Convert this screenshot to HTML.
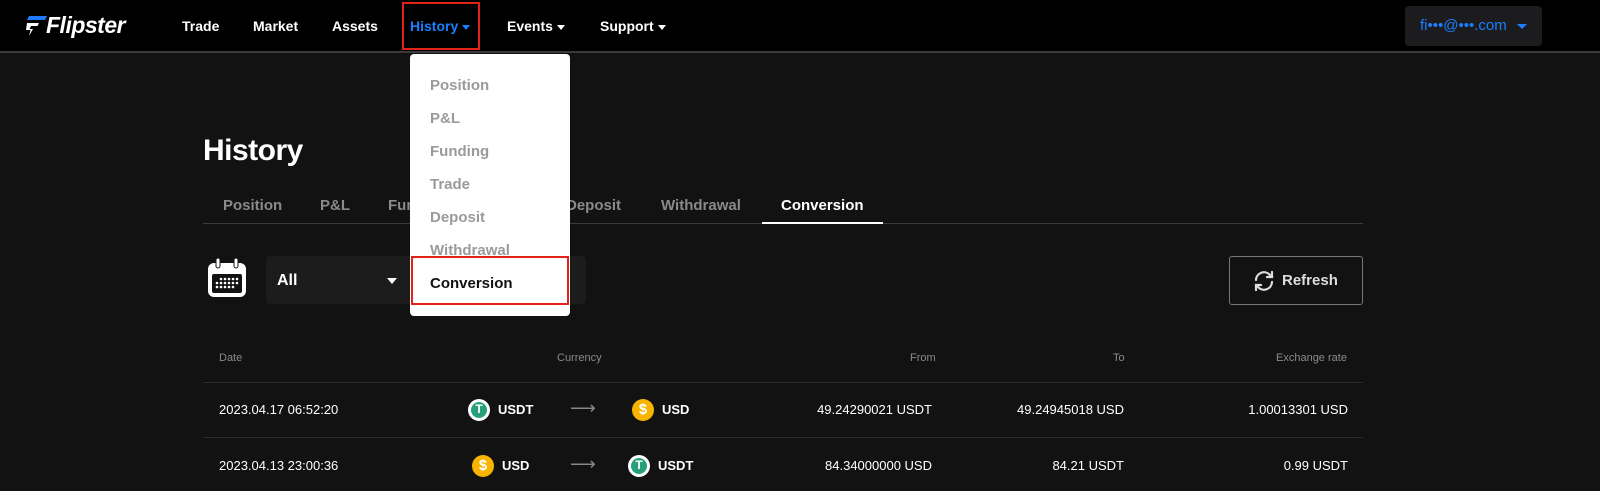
<!DOCTYPE html>
<html><head><style>
*{margin:0;padding:0;box-sizing:border-box}
body{width:1600px;height:491px;background:#121212;font-family:"Liberation Sans",sans-serif;color:#fff;position:relative;overflow:hidden}
.a{position:absolute;white-space:nowrap}
.nav{position:absolute;left:0;top:0;width:1600px;height:53px;background:#000;border-bottom:2px solid #3a3a3a}
.nl{font-size:14px;font-weight:bold;top:18px}
.car{display:inline-block;width:0;height:0;border-left:4px solid transparent;border-right:4px solid transparent;border-top:5px solid currentColor;vertical-align:middle;margin-left:4px}
.tab{font-size:15px;font-weight:bold;color:#8a8a8a;top:197px}
.dd{font-size:15px;font-weight:bold;color:#9a9a9a;left:430px}
.th{font-size:11px;color:#8a8a8a;top:352px}
.td{font-size:13px;top:402px}
.td2{top:458px}
.coin{position:absolute;width:22px;height:22px;border-radius:50%}
.t{background:#fff}.t::after{content:"";position:absolute;left:3px;top:3px;width:16px;height:16px;border-radius:50%;background:#26a17b}
.t span{position:absolute;left:0;top:3px;width:22px;text-align:center;font-size:12px;font-weight:bold;color:#fff;z-index:1}
.u{background:#f7b500;text-align:center;font-size:15px;font-weight:bold;line-height:22px;color:#fff}
</style></head><body>
<div class="nav"></div>
<svg class="a" style="left:24px;top:14px" width="24" height="24" viewBox="0 0 24 24"><path d="M5 2h18l-2 4H3z" fill="#1e7bff"/><path d="M3 9h12l-1.5 3H7l-1.5 3H9l-4 7 1.5-6H2z" fill="#fff"/></svg>
<div class="a" style="left:46px;top:12px;font-size:23px;font-weight:bold;font-style:italic;letter-spacing:-0.5px">Flipster</div>
<div class="a nl" style="left:182px">Trade</div>
<div class="a nl" style="left:253px">Market</div>
<div class="a nl" style="left:332px">Assets</div>
<div class="a nl" style="left:410px;color:#1a7fff">History<span class="car"></span></div>
<div class="a" style="left:402px;top:2px;width:78px;height:48px;border:2px solid #e2231a"></div>
<div class="a nl" style="left:507px">Events<span class="car"></span></div>
<div class="a nl" style="left:600px">Support<span class="car"></span></div>
<div class="a" style="left:1405px;top:6px;width:137px;height:40px;background:#1c1c1e;border-radius:4px"></div>
<div class="a" style="left:1420px;top:17px;font-size:15px;color:#1a7fff">fi•••@•••.com</div>
<div class="a" style="left:1517px;top:24px;width:0;height:0;border-left:5px solid transparent;border-right:5px solid transparent;border-top:5px solid #1a7fff"></div>

<div class="a" style="left:203px;top:134px;font-size:30px;font-weight:bold;letter-spacing:-0.5px">History</div>
<div class="a tab" style="left:223px">Position</div>
<div class="a tab" style="left:320px">P&amp;L</div>
<div class="a tab" style="left:388px">Funding</div>
<div class="a tab" style="left:566px">Deposit</div>
<div class="a tab" style="left:661px">Withdrawal</div>
<div class="a tab" style="left:781px;color:#fff">Conversion</div>
<div class="a" style="left:203px;top:223px;width:1160px;height:1px;background:#3a3a3a"></div>
<div class="a" style="left:762px;top:222px;width:121px;height:2px;background:#fff"></div>

<svg class="a" style="left:207px;top:258px" width="40" height="40" viewBox="0 0 40 40"><rect x="1" y="5" width="38" height="34" rx="6" fill="#fff"/><rect x="5" y="16" width="30" height="19" rx="2" fill="#121212"/><rect x="9" y="0" width="4" height="10" rx="2" fill="#fff" stroke="#121212"/><rect x="27" y="0" width="4" height="10" rx="2" fill="#fff" stroke="#121212"/><g fill="#fff"><circle cx="14" cy="21" r="1.3"/><circle cx="18" cy="21" r="1.3"/><circle cx="22" cy="21" r="1.3"/><circle cx="26" cy="21" r="1.3"/><circle cx="30" cy="21" r="1.3"/><circle cx="10" cy="25" r="1.3"/><circle cx="14" cy="25" r="1.3"/><circle cx="18" cy="25" r="1.3"/><circle cx="22" cy="25" r="1.3"/><circle cx="26" cy="25" r="1.3"/><circle cx="30" cy="25" r="1.3"/><circle cx="10" cy="29" r="1.3"/><circle cx="14" cy="29" r="1.3"/><circle cx="18" cy="29" r="1.3"/><circle cx="22" cy="29" r="1.3"/><circle cx="26" cy="29" r="1.3"/></g></svg>
<div class="a" style="left:266px;top:256px;width:320px;height:48px;background:#1c1c1c;border-radius:4px"></div>
<div class="a" style="left:277px;top:272px;font-size:16px;font-weight:bold">All</div>
<div class="a" style="left:387px;top:278px;width:0;height:0;border-left:5px solid transparent;border-right:5px solid transparent;border-top:6px solid #fff"></div>

<div class="a" style="left:1229px;top:256px;width:134px;height:49px;border:1px solid #777;border-radius:3px"></div>
<svg class="a" style="left:1253px;top:270px" width="22" height="22" viewBox="0 0 22 22" fill="none" stroke="#ddd" stroke-width="2.2" stroke-linecap="round"><path d="M3 10a8 8 0 0 1 14-5l2 2"/><path d="M19 2v5h-5"/><path d="M19 12a8 8 0 0 1-14 5l-2-2"/><path d="M3 20v-5h5"/></svg>
<div class="a" style="left:1282px;top:272px;font-size:15px;font-weight:bold;color:#ddd">Refresh</div>

<div class="a th" style="left:219px">Date</div>
<div class="a th" style="left:557px">Currency</div>
<div class="a th" style="left:910px">From</div>
<div class="a th" style="left:1113px">To</div>
<div class="a th" style="left:1276px">Exchange rate</div>
<div class="a" style="left:203px;top:382px;width:1160px;height:1px;background:#2a2a2a"></div>
<div class="a" style="left:203px;top:437px;width:1160px;height:1px;background:#2a2a2a"></div>

<div class="a td" style="left:219px">2023.04.17 06:52:20</div>
<div class="coin t" style="left:468px;top:399px"><span>T</span></div>
<div class="a td" style="left:498px;font-weight:bold">USDT</div>
<div class="a td" style="left:570px;color:#888;font-size:18px;top:398px">⟶</div>
<div class="coin u" style="left:632px;top:399px">$</div>
<div class="a td" style="left:662px;font-weight:bold">USD</div>
<div class="a td" style="right:668px">49.24290021 USDT</div>
<div class="a td" style="right:476px">49.24945018 USD</div>
<div class="a td" style="right:252px">1.00013301 USD</div>

<div class="a td td2" style="left:219px">2023.04.13 23:00:36</div>
<div class="coin u" style="left:472px;top:455px">$</div>
<div class="a td td2" style="left:502px;font-weight:bold">USD</div>
<div class="a td" style="left:570px;color:#888;font-size:18px;top:454px">⟶</div>
<div class="coin t" style="left:628px;top:455px"><span>T</span></div>
<div class="a td td2" style="left:658px;font-weight:bold">USDT</div>
<div class="a td td2" style="right:668px">84.34000000 USD</div>
<div class="a td td2" style="right:476px">84.21 USDT</div>
<div class="a td td2" style="right:252px">0.99 USDT</div>

<div class="a" style="left:410px;top:54px;width:160px;height:262px;background:#fff;border-radius:4px"></div>
<div class="a dd" style="top:77px">Position</div>
<div class="a dd" style="top:110px">P&amp;L</div>
<div class="a dd" style="top:143px">Funding</div>
<div class="a dd" style="top:176px">Trade</div>
<div class="a dd" style="top:209px">Deposit</div>
<div class="a dd" style="top:242px">Withdrawal</div>
<div class="a" style="left:411px;top:256px;width:158px;height:49px;border:2px solid #e2231a"></div>
<div class="a dd" style="top:275px;color:#111">Conversion</div>
</body></html>
